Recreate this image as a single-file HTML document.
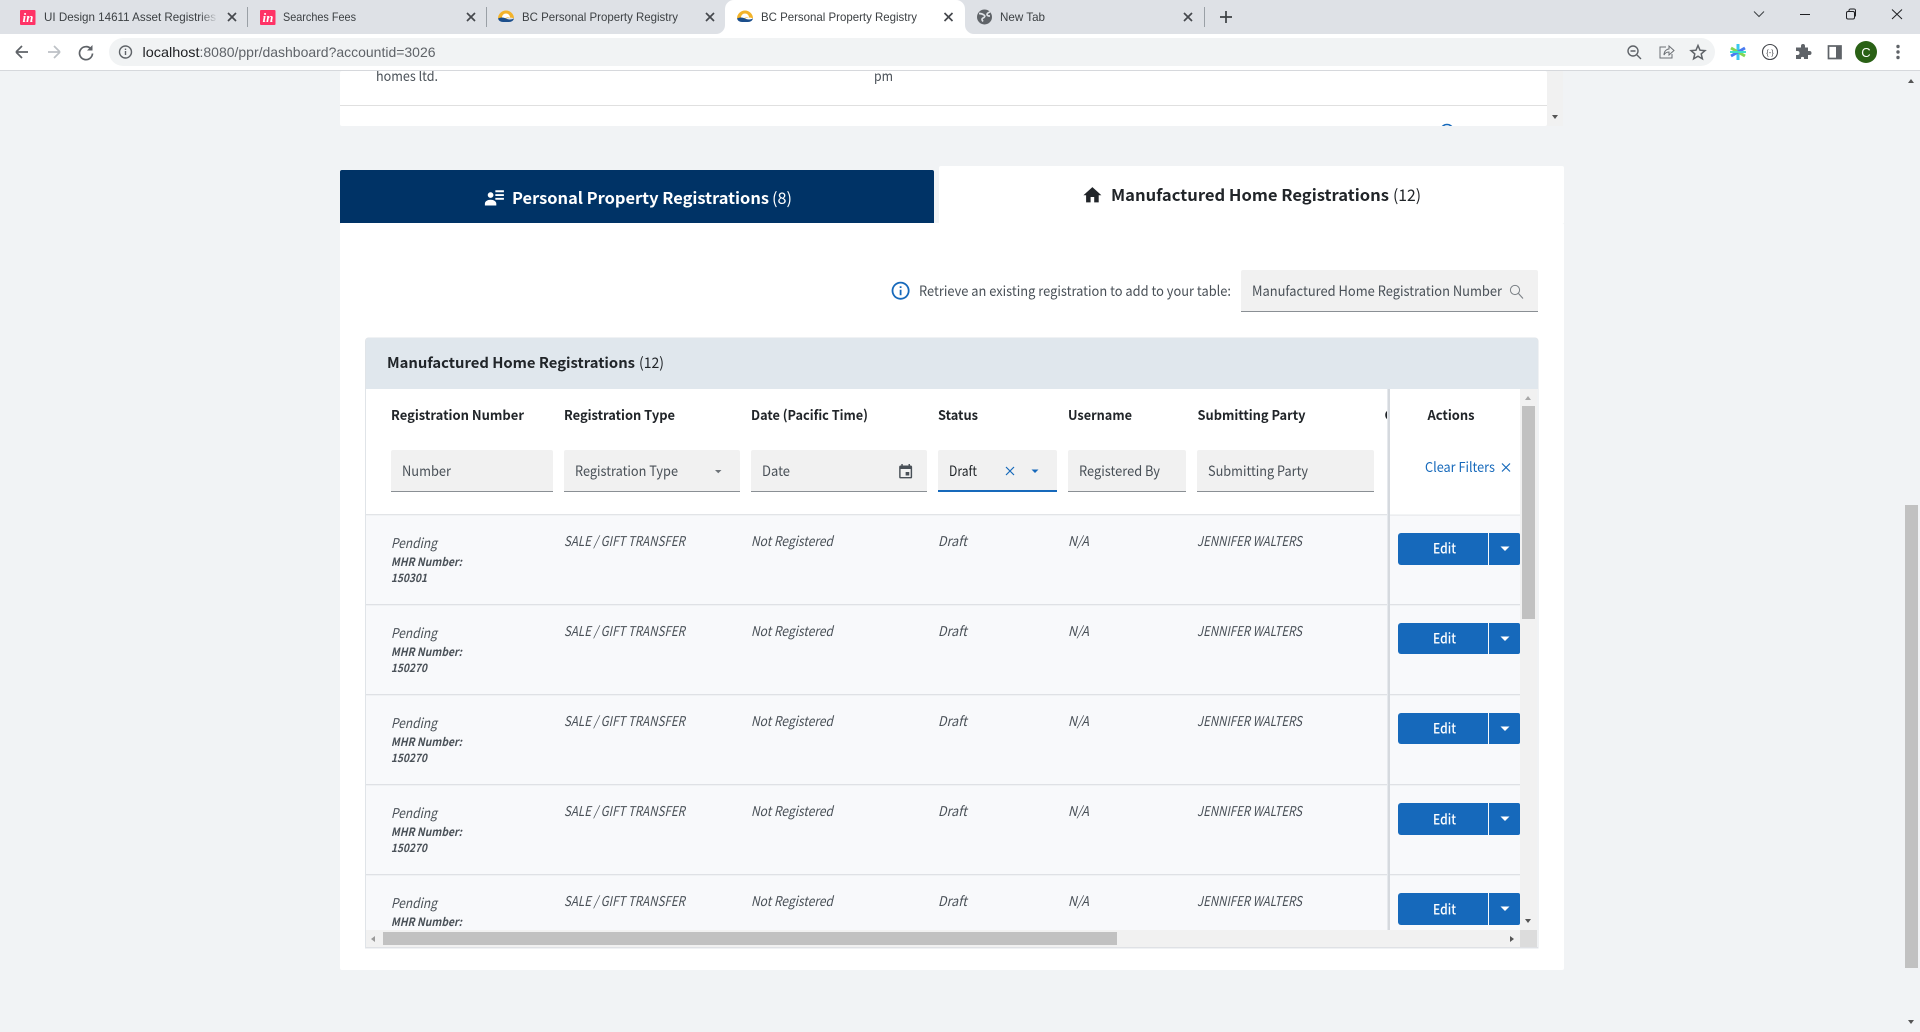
<!DOCTYPE html>
<html><head><meta charset="utf-8"><title>BC Personal Property Registry</title>
<style>
html,body{margin:0;padding:0;width:1920px;height:1032px;overflow:hidden;background:#f1f3f5}
svg{display:block;font-family:"Liberation Sans",Arial,sans-serif}
.pg{font-family:"Noto Sans CJK JP","Liberation Sans",sans-serif}
.h{font-weight:700;font-size:13.5px;fill:#212529}
.f{font-size:14px;fill:#495057}
.c{font-size:13.5px;fill:#495057;font-style:italic}
.m{font-size:11.5px;fill:#495057;font-style:italic;font-weight:700}
.t{font-size:12px;fill:#3c4043}
.e{font-size:14px;fill:#fff;text-anchor:middle;font-weight:500}
</style></head><body>
<svg width="1920" height="1032" viewBox="0 0 1920 1032" xmlns="http://www.w3.org/2000/svg">
<defs>
<linearGradient id="fade" x1="0" x2="1" y1="0" y2="0"><stop offset="0" stop-color="#dee1e6" stop-opacity="0"/><stop offset="1" stop-color="#dee1e6"/></linearGradient>
<clipPath id="tbl"><rect x="366" y="389" width="1154" height="541"/></clipPath>
<clipPath id="top"><rect x="340" y="71" width="1223" height="55"/></clipPath>
<g id="bcfav"><path d="M-8 2.5A8 8 0 0 1 8 2.5Q4 0.5 0 2.5T-8 2.5Z" fill="#f3b32a"/><path d="M-4 1.5A4 4 0 0 1 4 1.5Q2 1 0 1.8T-4 1.5Z" fill="#fff"/><path d="M-8 2.5Q-4 0.5 0 2.5T8 2.5Q7 6 3 6H-3Q-7 6 -8 2.5Z" fill="#1c4f8c"/></g>
<path id="x" d="M-4 -4L4 4M4 -4L-4 4" stroke="#45484d" stroke-width="1.7" fill="none"/>
</defs>

<!-- page bg -->
<rect width="1920" height="1032" fill="#f1f3f5"/>

<g class="pg">
<!-- top table card -->
<rect x="1547" y="71" width="16" height="55" fill="#f1f1f1"/>
<rect x="340" y="71" width="1207" height="55" rx="2" fill="#fff"/>
<rect x="340" y="105" width="1207" height="1" fill="#e0e0e0"/>
<text x="376" y="81" class="f" style="font-size:13.5px" textLength="62" lengthAdjust="spacingAndGlyphs">homes ltd.</text>
<text x="874" y="81" class="f" style="font-size:13.5px" textLength="19" lengthAdjust="spacingAndGlyphs">pm</text>
<g clip-path="url(#top)"><circle cx="1447" cy="131" r="6.5" fill="none" stroke="#1669bb" stroke-width="1.6"/></g>
<path d="M1552 115h6l-3 4z" fill="#555"/>

<!-- page scrollbar -->
<path d="M1908 83h6l-3 -4z" fill="#555"/>
<rect x="1905" y="505" width="13" height="463" fill="#c1c1c1"/>
<path d="M1908 1020h6l-3 4z" fill="#555"/>

<!-- main card + tabs -->
<rect x="340" y="223" width="1224" height="747" rx="2" fill="#fff"/>
<path d="M939 223V168a2 2 0 0 1 2 -2H1562a2 2 0 0 1 2 2V223Z" fill="#fff"/>
<path d="M340 223V172a2 2 0 0 1 2 -2H932a2 2 0 0 1 2 2V223Z" fill="#003366"/>
<g transform="translate(483,186.5) scale(.95)"><path fill="#fff" d="M11,9C11,10.66 9.66,12 8,12C6.34,12 5,10.66 5,9C5,7.34 6.34,6 8,6C9.66,6 11,7.34 11,9M14,20H2V18C2,15.79 4.69,14 8,14C11.31,14 14,15.79 14,18M22,12V14H13V12M22,8V10H13V8M22,4V6H13V4Z"/></g>
<text x="512" y="204" style="font-size:16px;font-weight:700;fill:#fff" textLength="257" lengthAdjust="spacingAndGlyphs">Personal Property Registrations</text>
<text x="772" y="204" style="font-size:16px;fill:#fff" textLength="20" lengthAdjust="spacingAndGlyphs">(8)</text>
<g transform="translate(1081.6,184.4) scale(.9)"><path fill="#212529" d="M10,20V14H14V20H19V12H22L12,3L2,12H5V20H10Z"/></g>
<text x="1111" y="201" style="font-size:16px;font-weight:700;fill:#212529" textLength="278" lengthAdjust="spacingAndGlyphs">Manufactured Home Registrations</text>
<text x="1393" y="201" style="font-size:16px;fill:#212529" textLength="28" lengthAdjust="spacingAndGlyphs">(12)</text>

<!-- retrieve -->
<g transform="translate(889.8,279.9) scale(.9)"><path fill="#1669bb" d="M11,9H13V7H11M12,20C7.59,20 4,16.41 4,12C4,7.59 7.59,4 12,4C16.41,4 20,7.59 20,12C20,16.41 16.41,20 12,20M12,2A10,10 0 0,0 2,12A10,10 0 0,0 12,22A10,10 0 0,0 22,12A10,10 0 0,0 12,2M11,17H13V11H11V17Z"/></g>
<text x="919" y="296" class="f" textLength="312" lengthAdjust="spacingAndGlyphs">Retrieve an existing registration to add to your table:</text>
<path d="M1241 272a2 2 0 0 1 2 -2H1536a2 2 0 0 1 2 2V312H1241Z" fill="#f1f1f1"/>
<rect x="1241" y="311" width="297" height="1" fill="#8a8f94"/>
<text x="1252" y="296" class="f" textLength="250" lengthAdjust="spacingAndGlyphs">Manufactured Home Registration Number</text>
<circle cx="1515" cy="290" r="4.6" fill="none" stroke="#7b8186" stroke-width="1"/><path d="M1518.5 293.5L1523 298.5" stroke="#7b8186" stroke-width="1.1"/>

<!-- table panel -->
<path d="M365.5 948V341a3 3 0 0 1 3 -3H1535a3 3 0 0 1 3 3V948Z" fill="#fff" stroke="#e0e4e8" stroke-width="1"/>
<path d="M366 389V341a3 3 0 0 1 3 -3H1535a3 3 0 0 1 3 3V389Z" fill="#e0e7ed"/>
<text x="387" y="368" style="font-size:14.5px;font-weight:700;fill:#212529" textLength="248" lengthAdjust="spacingAndGlyphs">Manufactured Home Registrations</text>
<text x="639" y="368" style="font-size:14.5px;fill:#212529" textLength="25" lengthAdjust="spacingAndGlyphs">(12)</text>

<!-- header row -->
<text x="391" y="420" class="h" textLength="133" lengthAdjust="spacingAndGlyphs">Registration Number</text>
<text x="564" y="420" class="h" textLength="111" lengthAdjust="spacingAndGlyphs">Registration Type</text>
<text x="751" y="420" class="h" textLength="117" lengthAdjust="spacingAndGlyphs">Date (Pacific Time)</text>
<text x="938" y="420" class="h" textLength="40" lengthAdjust="spacingAndGlyphs">Status</text>
<text x="1068" y="420" class="h" textLength="64" lengthAdjust="spacingAndGlyphs">Username</text>
<text x="1197.5" y="420" class="h" textLength="108" lengthAdjust="spacingAndGlyphs">Submitting Party</text>
<text x="1384.5" y="420" class="h">C</text>

<!-- filters -->
<g fill="#f1f1f1">
<path d="M391 452a2 2 0 0 1 2 -2H551a2 2 0 0 1 2 2V492H391Z"/>
<path d="M564 452a2 2 0 0 1 2 -2H738a2 2 0 0 1 2 2V492H564Z"/>
<path d="M751 452a2 2 0 0 1 2 -2H925a2 2 0 0 1 2 2V492H751Z"/>
<path d="M938 452a2 2 0 0 1 2 -2H1055a2 2 0 0 1 2 2V492H938Z"/>
<path d="M1068 452a2 2 0 0 1 2 -2H1184a2 2 0 0 1 2 2V492H1068Z"/>
<path d="M1197 452a2 2 0 0 1 2 -2H1372a2 2 0 0 1 2 2V492H1197Z"/>
</g>
<g fill="#8a8f94">
<rect x="391" y="491" width="162" height="1"/><rect x="564" y="491" width="176" height="1"/><rect x="751" y="491" width="176" height="1"/><rect x="1068" y="491" width="118" height="1"/><rect x="1197" y="491" width="177" height="1"/>
</g>
<rect x="938" y="490" width="119" height="2" fill="#1669bb"/>
<text x="402" y="476" class="f" textLength="49" lengthAdjust="spacingAndGlyphs">Number</text>
<text x="575" y="476" class="f" textLength="103" lengthAdjust="spacingAndGlyphs">Registration Type</text>
<path d="M715 470h6.5l-3.25 3.2z" fill="#6d7378"/>
<text x="762" y="476" class="f" textLength="28" lengthAdjust="spacingAndGlyphs">Date</text>
<g transform="translate(897,463.3) scale(.72)"><path fill="#495057" d="M19,19H5V8H19M16,1V3H8V1H6V3H5C3.89,3 3,3.89 3,5V19A2,2 0 0,0 5,21H19A2,2 0 0,0 21,19V5C21,3.89 20.1,3 19,3H18V1M17,12H12V17H17V12Z"/></g>
<text x="949" y="476" class="f" style="fill:#212529" textLength="28" lengthAdjust="spacingAndGlyphs">Draft</text>
<path d="M1006 467L1014 475M1014 467L1006 475" stroke="#1669bb" stroke-width="1.2" fill="none"/>
<path d="M1031.5 469.5h7l-3.5 3.5z" fill="#1669bb"/>
<text x="1079" y="476" class="f" textLength="81" lengthAdjust="spacingAndGlyphs">Registered By</text>
<text x="1208" y="476" class="f" textLength="100" lengthAdjust="spacingAndGlyphs">Submitting Party</text>

<!-- rows -->
<g clip-path="url(#tbl)">
<rect x="366" y="514" width="1154" height="416" fill="#f8f9fb"/>
<rect x="366" y="514" width="1154" height="1.3" fill="#e2e4e7"/>
<rect x="366" y="604" width="1154" height="1.3" fill="#dfe1e5"/>
<rect x="366" y="694" width="1154" height="1.3" fill="#dfe1e5"/>
<rect x="366" y="784" width="1154" height="1.3" fill="#dfe1e5"/>
<rect x="366" y="874" width="1154" height="1.3" fill="#dfe1e5"/>

<g>
<text x="391" y="548" class="c" textLength="46" lengthAdjust="spacingAndGlyphs">Pending</text>
<text x="391" y="566" class="m" textLength="71" lengthAdjust="spacingAndGlyphs">MHR Number:</text>
<text x="391" y="582" class="m" textLength="36" lengthAdjust="spacingAndGlyphs">150301</text>
<text x="564" y="546" class="c" textLength="121" lengthAdjust="spacingAndGlyphs">SALE / GIFT TRANSFER</text>
<text x="751" y="546" class="c" textLength="82" lengthAdjust="spacingAndGlyphs">Not Registered</text>
<text x="938" y="546" class="c" textLength="29" lengthAdjust="spacingAndGlyphs">Draft</text>
<text x="1068" y="546" class="c" textLength="21" lengthAdjust="spacingAndGlyphs">N/A</text>
<text x="1197" y="546" class="c" textLength="105" lengthAdjust="spacingAndGlyphs">JENNIFER WALTERS</text>
</g>
<g transform="translate(0,90)">
<text x="391" y="548" class="c" textLength="46" lengthAdjust="spacingAndGlyphs">Pending</text>
<text x="391" y="566" class="m" textLength="71" lengthAdjust="spacingAndGlyphs">MHR Number:</text>
<text x="391" y="582" class="m" textLength="36" lengthAdjust="spacingAndGlyphs">150270</text>
<text x="564" y="546" class="c" textLength="121" lengthAdjust="spacingAndGlyphs">SALE / GIFT TRANSFER</text>
<text x="751" y="546" class="c" textLength="82" lengthAdjust="spacingAndGlyphs">Not Registered</text>
<text x="938" y="546" class="c" textLength="29" lengthAdjust="spacingAndGlyphs">Draft</text>
<text x="1068" y="546" class="c" textLength="21" lengthAdjust="spacingAndGlyphs">N/A</text>
<text x="1197" y="546" class="c" textLength="105" lengthAdjust="spacingAndGlyphs">JENNIFER WALTERS</text>
</g>
<g transform="translate(0,180)">
<text x="391" y="548" class="c" textLength="46" lengthAdjust="spacingAndGlyphs">Pending</text>
<text x="391" y="566" class="m" textLength="71" lengthAdjust="spacingAndGlyphs">MHR Number:</text>
<text x="391" y="582" class="m" textLength="36" lengthAdjust="spacingAndGlyphs">150270</text>
<text x="564" y="546" class="c" textLength="121" lengthAdjust="spacingAndGlyphs">SALE / GIFT TRANSFER</text>
<text x="751" y="546" class="c" textLength="82" lengthAdjust="spacingAndGlyphs">Not Registered</text>
<text x="938" y="546" class="c" textLength="29" lengthAdjust="spacingAndGlyphs">Draft</text>
<text x="1068" y="546" class="c" textLength="21" lengthAdjust="spacingAndGlyphs">N/A</text>
<text x="1197" y="546" class="c" textLength="105" lengthAdjust="spacingAndGlyphs">JENNIFER WALTERS</text>
</g>
<g transform="translate(0,270)">
<text x="391" y="548" class="c" textLength="46" lengthAdjust="spacingAndGlyphs">Pending</text>
<text x="391" y="566" class="m" textLength="71" lengthAdjust="spacingAndGlyphs">MHR Number:</text>
<text x="391" y="582" class="m" textLength="36" lengthAdjust="spacingAndGlyphs">150270</text>
<text x="564" y="546" class="c" textLength="121" lengthAdjust="spacingAndGlyphs">SALE / GIFT TRANSFER</text>
<text x="751" y="546" class="c" textLength="82" lengthAdjust="spacingAndGlyphs">Not Registered</text>
<text x="938" y="546" class="c" textLength="29" lengthAdjust="spacingAndGlyphs">Draft</text>
<text x="1068" y="546" class="c" textLength="21" lengthAdjust="spacingAndGlyphs">N/A</text>
<text x="1197" y="546" class="c" textLength="105" lengthAdjust="spacingAndGlyphs">JENNIFER WALTERS</text>
</g>
<g transform="translate(0,360)">
<text x="391" y="548" class="c" textLength="46" lengthAdjust="spacingAndGlyphs">Pending</text>
<text x="391" y="566" class="m" textLength="71" lengthAdjust="spacingAndGlyphs">MHR Number:</text>
<text x="564" y="546" class="c" textLength="121" lengthAdjust="spacingAndGlyphs">SALE / GIFT TRANSFER</text>
<text x="751" y="546" class="c" textLength="82" lengthAdjust="spacingAndGlyphs">Not Registered</text>
<text x="938" y="546" class="c" textLength="29" lengthAdjust="spacingAndGlyphs">Draft</text>
<text x="1068" y="546" class="c" textLength="21" lengthAdjust="spacingAndGlyphs">N/A</text>
<text x="1197" y="546" class="c" textLength="105" lengthAdjust="spacingAndGlyphs">JENNIFER WALTERS</text>
</g>
</g>

<!-- sticky actions column -->
<rect x="1390" y="389" width="130" height="126" fill="#fff"/>
<rect x="1390" y="514.5" width="130" height="1.2" fill="#e6e8eb"/>
<rect x="1387" y="389" width="1" height="541" fill="#e6e9ed"/>
<rect x="1388" y="389" width="2" height="541" fill="#d5d9de"/>
<text x="1427.5" y="420" class="h" textLength="47" lengthAdjust="spacingAndGlyphs">Actions</text>
<text x="1425" y="472" style="font-size:13.5px;fill:#1669bb" textLength="70" lengthAdjust="spacingAndGlyphs">Clear Filters</text>
<path d="M1502 463.5L1510 471.5M1510 463.5L1502 471.5" stroke="#1669bb" stroke-width="1.2" fill="none"/>

<g>
<path d="M1398 536a3 3 0 0 1 3 -3H1488V565H1401a3 3 0 0 1 -3 -3Z" fill="#1669bb"/>
<path d="M1489 533H1518a2 2 0 0 1 2 2V563a2 2 0 0 1 -2 2H1489Z" fill="#1669bb"/>
<text x="1444.5" y="553.5" class="e" textLength="23" lengthAdjust="spacingAndGlyphs">Edit</text>
<path d="M1500.5 546.5h9l-4.5 4.5z" fill="#fff"/>
</g>
<g transform="translate(0,90)">
<path d="M1398 536a3 3 0 0 1 3 -3H1488V564H1401a3 3 0 0 1 -3 -3Z" fill="#1669bb"/>
<path d="M1489 533H1518a2 2 0 0 1 2 2V562a2 2 0 0 1 -2 2H1489Z" fill="#1669bb"/>
<text x="1444.5" y="553.5" class="e" textLength="23" lengthAdjust="spacingAndGlyphs">Edit</text>
<path d="M1500.5 546.5h9l-4.5 4.5z" fill="#fff"/>
</g>
<g transform="translate(0,180)">
<path d="M1398 536a3 3 0 0 1 3 -3H1488V564H1401a3 3 0 0 1 -3 -3Z" fill="#1669bb"/>
<path d="M1489 533H1518a2 2 0 0 1 2 2V562a2 2 0 0 1 -2 2H1489Z" fill="#1669bb"/>
<text x="1444.5" y="553.5" class="e" textLength="23" lengthAdjust="spacingAndGlyphs">Edit</text>
<path d="M1500.5 546.5h9l-4.5 4.5z" fill="#fff"/>
</g>
<g transform="translate(0,270)">
<path d="M1398 536a3 3 0 0 1 3 -3H1488V565H1401a3 3 0 0 1 -3 -3Z" fill="#1669bb"/>
<path d="M1489 533H1518a2 2 0 0 1 2 2V563a2 2 0 0 1 -2 2H1489Z" fill="#1669bb"/>
<text x="1444.5" y="554.5" class="e" textLength="23" lengthAdjust="spacingAndGlyphs">Edit</text>
<path d="M1500.5 546.5h9l-4.5 4.5z" fill="#fff"/>
</g>
<g transform="translate(0,360)">
<path d="M1398 536a3 3 0 0 1 3 -3H1488V565H1401a3 3 0 0 1 -3 -3Z" fill="#1669bb"/>
<path d="M1489 533H1518a2 2 0 0 1 2 2V563a2 2 0 0 1 -2 2H1489Z" fill="#1669bb"/>
<text x="1444.5" y="554.5" class="e" textLength="23" lengthAdjust="spacingAndGlyphs">Edit</text>
<path d="M1500.5 546.5h9l-4.5 4.5z" fill="#fff"/>
</g>

<!-- inner scrollbars -->
<rect x="1520" y="389" width="17" height="541" fill="#f1f1f1"/>
<rect x="1522" y="406" width="13" height="213" fill="#c1c1c1"/>
<path d="M1525 400h6l-3 -4z" fill="#a8a8a8"/>
<path d="M1525 919h6l-3 4z" fill="#555"/>
<rect x="366" y="930" width="1154" height="17" fill="#f1f1f1"/>
<rect x="1520" y="930" width="17" height="17" fill="#dcdcdc"/>
<rect x="383" y="932" width="734" height="13" fill="#c1c1c1"/>
<path d="M375 936v6l-4 -3z" fill="#9a9a9a"/>
<path d="M1510 936v6l4 -3z" fill="#555"/>
<rect x="366" y="947" width="1172" height="1" fill="#dfe1e5"/>
</g>

<!-- browser chrome -->
<rect width="1920" height="34" fill="#dee1e6"/>
<rect y="34" width="1920" height="36" fill="#fff"/>
<rect y="70" width="1920" height="1" fill="#d6d8dc"/>
<path d="M716 34a9 9 0 0 0 9 -9V9a9 9 0 0 1 9 -9H956a9 9 0 0 1 9 9V25a9 9 0 0 0 9 9Z" fill="#fff"/>
<rect x="247" y="7" width="1" height="20" fill="#9aa0a6"/>
<rect x="486" y="7" width="1" height="20" fill="#9aa0a6"/>
<rect x="1204" y="7" width="1" height="20" fill="#9aa0a6"/>

<rect x="20" y="10" width="15.5" height="15" rx="1" fill="#ff3366"/>
<text x="22.5" y="22" style="font-family:'Liberation Serif',serif;font-style:italic;font-weight:700;font-size:13px;fill:#fff">in</text>
<text x="44" y="21" class="t" textLength="172" lengthAdjust="spacingAndGlyphs">UI Design 14611 Asset Registries</text>
<rect x="200" y="8" width="18" height="18" fill="url(#fade)"/>
<use href="#x" x="232" y="17"/>

<rect x="260" y="10" width="15.5" height="15" rx="1" fill="#ff3366"/>
<text x="262.5" y="22" style="font-family:'Liberation Serif',serif;font-style:italic;font-weight:700;font-size:13px;fill:#fff">in</text>
<text x="283" y="21" class="t" textLength="73" lengthAdjust="spacingAndGlyphs">Searches Fees</text>
<use href="#x" x="471" y="17"/>

<use href="#bcfav" x="506" y="16"/>
<text x="522" y="21" class="t" textLength="156" lengthAdjust="spacingAndGlyphs">BC Personal Property Registry</text>
<use href="#x" x="710" y="17"/>

<use href="#bcfav" x="745" y="16"/>
<text x="761" y="21" class="t" textLength="156" lengthAdjust="spacingAndGlyphs">BC Personal Property Registry</text>
<use href="#x" x="948.5" y="17"/>

<circle cx="984.5" cy="17" r="7.5" fill="#5f6368"/>
<path d="M979 13.5q3 0 5 1.5t-1 3q-2 1 0 3.5M990 12q-3 1 -3 2.5t3 1.5" fill="none" stroke="#dee1e6" stroke-width="1.7"/>
<text x="1000" y="21" class="t" textLength="45" lengthAdjust="spacingAndGlyphs">New Tab</text>
<use href="#x" x="1188" y="17"/>
<path d="M1226 11V23M1220 17H1232" stroke="#3c4043" stroke-width="1.7"/>

<!-- window controls -->
<path d="M1754 11.5L1759 16.5L1764 11.5" fill="none" stroke="#3c4043" stroke-width="1"/>
<rect x="1800" y="14" width="10" height="1" fill="#1f2023"/>
<rect x="1846.5" y="11.5" width="8" height="7.5" rx="1.5" fill="none" stroke="#1f2023" stroke-width="1"/>
<path d="M1849 11V10a1.5 1.5 0 0 1 1.5 -1H1854a1.5 1.5 0 0 1 1.5 1V15a1.5 1.5 0 0 1 -1 1.5" fill="none" stroke="#1f2023" stroke-width="1"/>
<path d="M1892 9.5L1902 19M1902 9.5L1892 19" stroke="#1f2023" stroke-width="1"/>

<!-- toolbar -->
<path d="M16 52H28M16 52L22 46M16 52L22 58" fill="none" stroke="#5f6368" stroke-width="1.7"/>
<path d="M48 52H60M60 52L54 46M60 52L54 58" fill="none" stroke="#bdc1c6" stroke-width="1.7"/>
<path d="M91 49A6.5 6.5 0 1 0 92.5 53.5" fill="none" stroke="#5f6368" stroke-width="1.7"/><path d="M92.5 45V50.5H87Z" fill="#5f6368"/>
<rect x="109" y="38" width="1606" height="28" rx="14" fill="#f1f3f4"/>
<circle cx="125.5" cy="52" r="6" fill="none" stroke="#5f6368" stroke-width="1.4"/><rect x="124.8" y="51" width="1.4" height="4" fill="#5f6368"/><rect x="124.8" y="48.6" width="1.4" height="1.4" fill="#5f6368"/>
<text x="142.5" y="57" style="font-size:14px;fill:#202124" textLength="57" lengthAdjust="spacingAndGlyphs">localhost</text>
<text x="199.5" y="57" style="font-size:14px;fill:#5f6368" textLength="236" lengthAdjust="spacingAndGlyphs">:8080/ppr/dashboard?accountid=3026</text>

<circle cx="1633" cy="51" r="5" fill="none" stroke="#5f6368" stroke-width="1.4"/><path d="M1630.5 51H1635.5M1637 55L1641 59" stroke="#5f6368" stroke-width="1.4"/>
<path d="M1666 47H1660V58H1672V54" fill="none" stroke="#6b6f74" stroke-width="1"/><path d="M1664 55C1664 50 1668 49 1669 49V46L1674 50.5L1669 55V52C1667 52 1665 53 1664 55Z" fill="none" stroke="#6b6f74" stroke-width="1"/>
<path d="M1698 45.5L1700 50.2L1705 50.6L1701.2 53.9L1702.4 58.8L1698 56.2L1693.6 58.8L1694.8 53.9L1691 50.6L1696 50.2Z" fill="none" stroke="#5f6368" stroke-width="1.5"/>
<path d="M1738 44V60" stroke="#39c7f0" stroke-width="3"/><path d="M1731 48L1745 56" stroke="#84d652" stroke-width="3"/><path d="M1731 56L1745 48" stroke="#4a7bf0" stroke-width="3"/><path d="M1730 52H1746" stroke="#3fe0c8" stroke-width="2"/>
<circle cx="1770" cy="52" r="7.5" fill="none" stroke="#45484d" stroke-width="1.1"/><text x="1770" y="55" style="font-size:7.5px;fill:#45484d;text-anchor:middle">{-}</text>
<path d="M1798 47.5H1801V46a2 2 0 0 1 4 0V47.5H1808V51H1809.5a2 2 0 0 1 0 4H1808V59H1804V57.5a2 2 0 0 0 -3 0V59H1796V55H1797.5a2 2 0 0 0 0 -4H1796V47.5Z" fill="#5f6368"/>
<rect x="1828.5" y="46" width="12.5" height="12.5" fill="none" stroke="#5f6368" stroke-width="1.7"/><rect x="1836" y="46" width="5" height="12.5" fill="#5f6368"/>
<circle cx="1866" cy="52" r="11" fill="#2a6116"/>
<text x="1866" y="57" style="font-size:13px;fill:#fff;text-anchor:middle">C</text>
<circle cx="1898" cy="46.5" r="1.7" fill="#5f6368"/><circle cx="1898" cy="52" r="1.7" fill="#5f6368"/><circle cx="1898" cy="57.5" r="1.7" fill="#5f6368"/>
</svg>
</body></html>
